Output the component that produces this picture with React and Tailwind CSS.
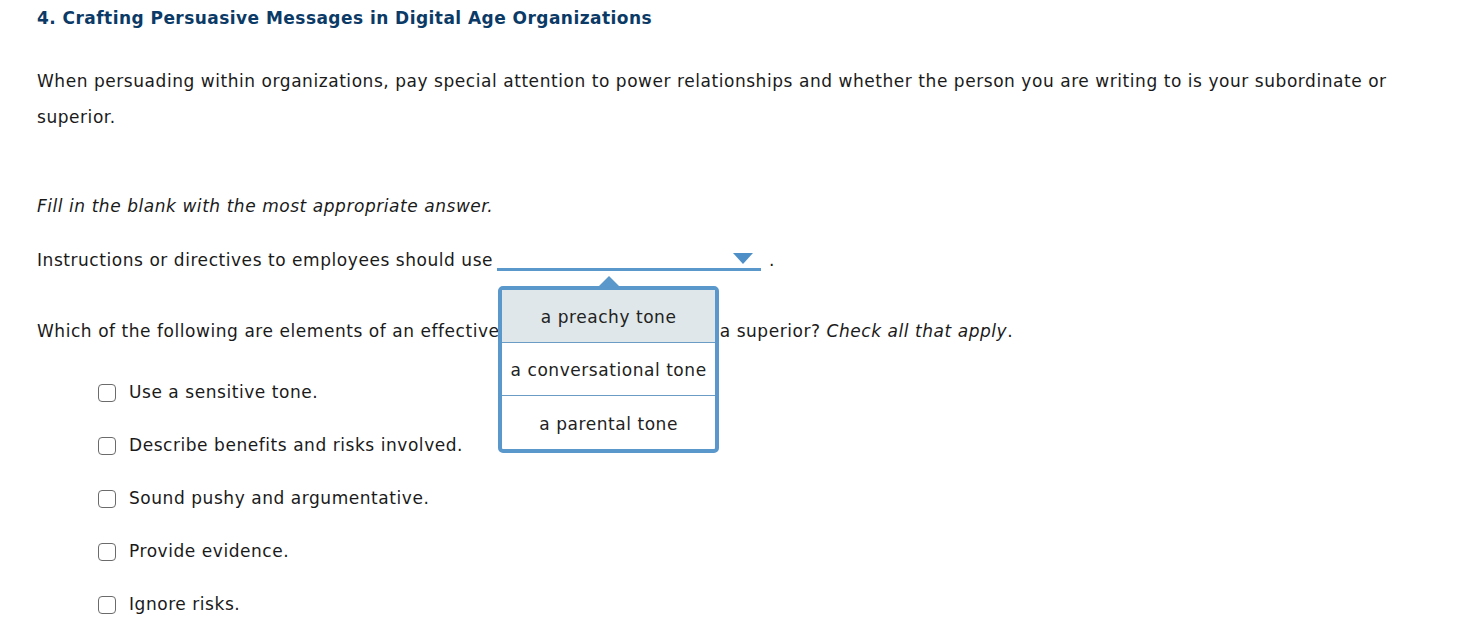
import React from "react";

const options = ["a preachy tone", "a conversational tone", "a parental tone"];
const checks = [
  "Use a sensitive tone.",
  "Describe benefits and risks involved.",
  "Sound pushy and argumentative.",
  "Provide evidence.",
  "Ignore risks.",
];

export default function App() {
  return (
    <div
      className="min-h-[634px] bg-white px-[37px] pt-[6px] text-[17px] tracking-[0.55px] text-[#1a1a1a]"
      style={{ fontFamily: '"DejaVu Sans", Verdana, sans-serif' }}
    >
      <h2 className="text-[17px] font-bold leading-[24px] tracking-[0.45px] text-[#0b3a66]">
        4. Crafting Persuasive Messages in Digital Age Organizations
      </h2>
      <p className="mt-[33px] leading-[36px]">
        When persuading within organizations, pay special attention to power relationships and whether the person you are writing to is your subordinate or superior.
      </p>
      <p className="mt-[53px] italic leading-[36px]">Fill in the blank with the most appropriate answer.</p>
      <div className="mt-[18px] flex items-end leading-[36px]">
        <span>Instructions or directives to employees should use</span>
        <div className="relative ml-[4px] mb-[7px] h-[22px] w-[264px] border-b-[3px] border-[#5a97cb]">
          <svg className="absolute right-[8px] top-[4px]" width="20" height="12" viewBox="0 0 20 12">
            <path d="M0 0 L20 0 L10 11 Z" fill="#4f8fc7" />
          </svg>
          <div className="absolute left-[1px] top-[37px] z-10 w-[221px]">
            <svg className="absolute left-[100px] top-[-11px]" width="22" height="12" viewBox="0 0 22 12">
              <path d="M0 12 L11 1 L22 12 Z" fill="#5a97cb" />
            </svg>
            <div className="rounded-[5px] border-[4px] border-[#5a97cb] bg-white">
              {options.map((o, i) => (
                <div
                  key={o}
                  className={
                    "flex h-[53px] items-center justify-center pt-[2px] text-[#222] " +
                    (i === 0 ? "bg-[#dfe7ea] " : "") +
                    (i < options.length - 1 ? "border-b border-[#6b9cc6]" : "")
                  }
                >
                  {o}
                </div>
              ))}
            </div>
          </div>
        </div>
        <span className="ml-[8px]">.</span>
      </div>
      <p className="mt-[35px] leading-[36px]">
        Which of the following are elements of an effective persuasive message to a superior? <span className="italic">Check all that apply</span>.
      </p>
      <div className="mt-[17px] ml-[61px] flex flex-col">
        {checks.map((c) => (
          <label key={c} className="flex h-[53px] items-center gap-[13px]">
            <span className="h-[18px] w-[18px] rounded-[4px] border-[1.5px] border-[#6b6b6b] bg-white" />
            <span>{c}</span>
          </label>
        ))}
      </div>
    </div>
  );
}
